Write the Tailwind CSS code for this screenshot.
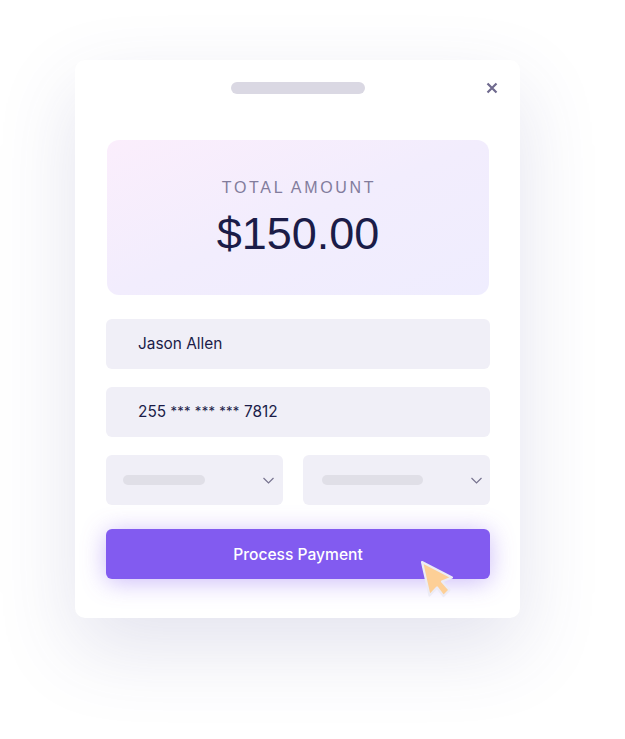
<!DOCTYPE html>
<html lang="en">

<head>
    <meta charset="UTF-8">
    <meta name="viewport" content="width=device-width, initial-scale=1.0">
    <script src="https://cdn.jsdelivr.net/npm/@tailwindcss/browser@4"></script>
    <title>Payment</title>
</head>

<body class="bg-white h-[739px] overflow-hidden font-['Inter','Liberation_Sans',sans-serif]">

    <div class="pt-[60px] pl-[75px]">
        <!-- card -->
        <div class="relative w-[445px] h-[558px] bg-white rounded-[10px] px-[31px] pr-[30px] shadow-[0_30px_80px_rgba(70,70,140,0.15)]">
            <!-- handle + close -->
            <div class="relative h-[80px] flex justify-center pt-[22px]">
                <div class="w-[134px] h-[12px] rounded-full bg-[#dad8e3]"></div>
                <svg class="absolute right-[-8px] top-[22px] w-[12px] h-[12px]" viewBox="0 0 12 12" fill="none" stroke="#6f6a8e" stroke-width="2.2">
                    <path d="M1.5 1.5l9 9M10.5 1.5l-9 9" />
                </svg>
            </div>

            <!-- total -->
            <div class="w-[382px] h-[155px] ml-px rounded-xl bg-gradient-to-br from-[#fbeefc] via-[#f2edfd] to-[#efedfe] flex flex-col items-center pt-[38px] font-['Liberation_Sans',sans-serif]">
                <p class="text-[16px] leading-[19px] tracking-[0.166em] pl-[2px] text-[#827c9c]">TOTAL AMOUNT</p>
                <p class="text-[45px] leading-[52px] mt-[11px] text-[#1b1c48]">$150.00</p>
            </div>

            <!-- fields -->
            <div class="mt-[24px] flex flex-col gap-[18px]">
                <div class="h-[50px] rounded-md bg-[#f0eff7] flex items-center pl-[32px] text-[15.4px] text-[#1b1c48]">Jason Allen</div>
                <div class="h-[50px] rounded-md bg-[#f0eff7] flex items-center pl-[32px] text-[15.4px] text-[#1b1c48] whitespace-pre">255 <span class="text-[13px] tracking-[0.3px]">*** *** ***</span> 7812</div>
                <div class="flex gap-[20px]">
                    <div class="w-[177px] h-[50px] rounded-md bg-[#f0eff7] flex items-center justify-between pl-[17px] pr-[9px]">
                        <div class="w-[82px] h-[10px] rounded-full bg-[#e0dfe7]"></div>
                        <svg class="w-[11px] h-[7px]" viewBox="0 0 11 7" fill="none" stroke="#77738f" stroke-width="1.2"><path d="M.5 1l5 5 5-5" /></svg>
                    </div>
                    <div class="w-[187px] h-[50px] rounded-md bg-[#f0eff7] flex items-center justify-between pl-[19px] pr-[8px]">
                        <div class="w-[101px] h-[10px] rounded-full bg-[#e0dfe7]"></div>
                        <svg class="w-[11px] h-[7px]" viewBox="0 0 11 7" fill="none" stroke="#77738f" stroke-width="1.2"><path d="M.5 1l5 5 5-5" /></svg>
                    </div>
                </div>
            </div>

            <!-- button -->
            <button class="mt-[24px] w-[384px] h-[50px] pt-[1px] rounded-md bg-[#825bf0] text-white text-[15.6px] font-medium shadow-[0_3px_24px_rgba(130,91,240,0.42)]">
                Process Payment
            </button>

            <!-- cursor -->
            <svg class="absolute left-[342px] top-[497px] w-[40px] h-[42px]" viewBox="0 0 40 42" fill="none">
                <path d="M5 5L35 20.5L25 24.5L32.5 33L26.5 39L20 30.5L12.5 38.5Z" fill="#fdcf96" stroke="#ecebf5" stroke-width="2.2" stroke-linejoin="round" />
            </svg>
        </div>
    </div>

</body>

</html>
